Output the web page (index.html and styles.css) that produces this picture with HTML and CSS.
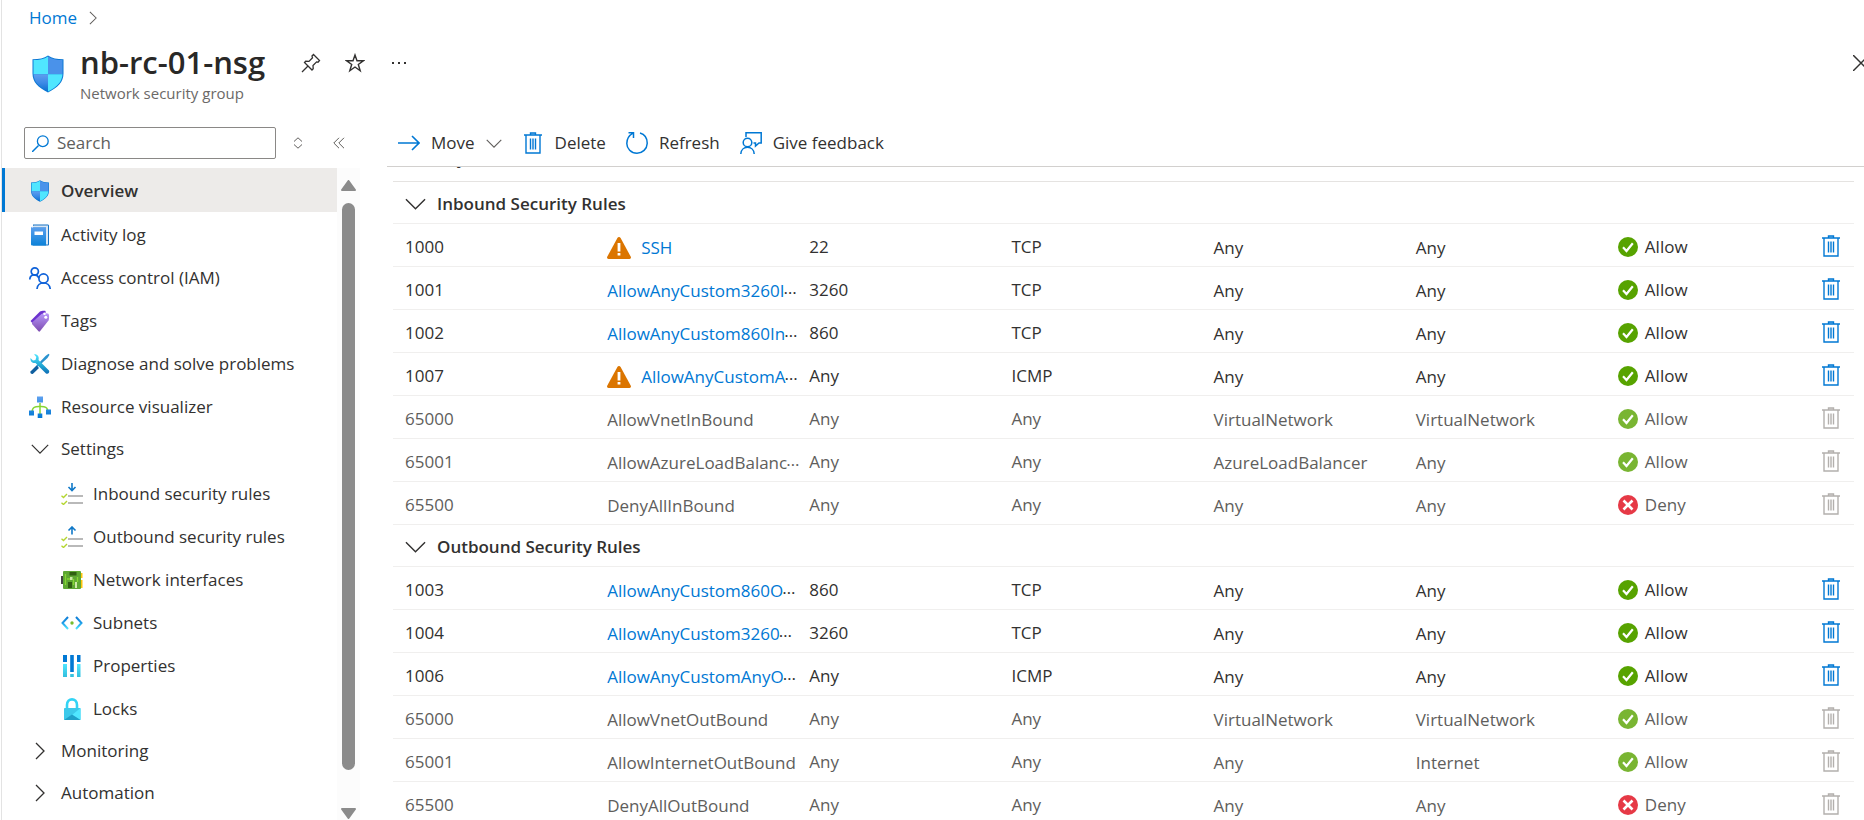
FILE: index.html
```html
<!DOCTYPE html>
<html lang="en">
<head>
    <meta charset="UTF-8">
    <meta name="viewport" content="width=device-width, initial-scale=1.0">
    <title>nb-rc-01-nsg</title>
    <link rel="stylesheet" href="styles.css">
</head>
<body>
    <!--shared icons-->
    <svg class="sprite" aria-hidden="true">
        <defs>
            <linearGradient id="g-dark" x1="0" y1="0" x2="0" y2="1"><stop offset="0" stop-color="#5e9ff0"/><stop offset=".5" stop-color="#3d8ae6"/><stop offset="1" stop-color="#0c70d0"/></linearGradient>
            <linearGradient id="g-book" x1="0" y1="0" x2="0" y2="1"><stop offset="0" stop-color="#5ea0ef"/><stop offset="1" stop-color="#0c82d8"/></linearGradient>
            <linearGradient id="g-tag" x1="0" y1="0" x2="0" y2="1"><stop offset="0" stop-color="#b796f9"/><stop offset="1" stop-color="#7d4cb0"/></linearGradient>
            <linearGradient id="g-tool" x1="0" y1="0" x2="0" y2="1"><stop offset="0" stop-color="#50e6ff"/><stop offset=".6" stop-color="#1fa5d2"/><stop offset="1" stop-color="#0f6db5"/></linearGradient>
            <linearGradient id="g-box" x1="0" y1="0" x2="0" y2="1"><stop offset="0" stop-color="#5ea0ef"/><stop offset="1" stop-color="#0078d4"/></linearGradient>
            <linearGradient id="g-angle" x1="0" y1="0" x2="0" y2="1"><stop offset="0" stop-color="#0f7cd6"/><stop offset=".5" stop-color="#1f9de8"/><stop offset="1" stop-color="#50e6ff"/></linearGradient>
            <linearGradient id="g-bar" x1="0" y1="0" x2="0" y2="1"><stop offset="0" stop-color="#50e6ff"/><stop offset="1" stop-color="#32bedd"/></linearGradient>
        </defs>
        <symbol id="shield" viewBox="0 0 32 38">
            <path d="M16 .5C12 3.300 7 4.200.5 4.200V18.500C.5 27 6 32.500 16 37.500 26 32.500 31.500 27 31.500 18.500V4.200C25 4.200 20 3.300 16 .5Z" fill="#0c78d4"/>
            <path d="M16 1.500C12 4.300 7.500 5 1.500 5.100V19.300H16Z" fill="#50e6ff"/>
            <path d="M16 1.500C20 4.300 24.500 5 30.500 5.100V19.300H16Z" fill="#4a92ea"/>
            <path d="M1.500 19.300C2 27 7 32 16 36.500V19.300Z" fill="url(#g-dark)"/>
            <path d="M30.500 19.300C30 27 25 32 16 36.500V19.300Z" fill="#50e6ff"/>
        </symbol>
        <symbol id="chev-down" viewBox="0 0 22 12"><path d="M1 1 11 11 21 1" fill="none" stroke="currentColor" stroke-width="1.500"/></symbol>
        <symbol id="chev-right" viewBox="0 0 10 18"><path d="M1 1 9 9 1 17" fill="none" stroke="currentColor" stroke-width="1.300"/></symbol>
        <symbol id="trash" viewBox="0 0 18 22">
            <path d="M6.500 3V1h5v2Z" fill="currentColor" fill-opacity=".25"/>
            <path d="M2 3.500V21H16V3.500M0 3H18M6.500 3V1h5v2M6.500 6.500v11M9 6.500v11M11.500 6.500v11" fill="none" stroke="currentColor" stroke-width="1.400"/>
        </symbol>
        <symbol id="ok" viewBox="0 0 20 20"><circle cx="10" cy="10" r="10" fill="currentColor"/><path d="M5 10.300 8.500 14 14.800 6.200" fill="none" stroke="#fff" stroke-width="2.200"/></symbol>
        <symbol id="no" viewBox="0 0 20 20"><circle cx="10" cy="10" r="10" fill="currentColor"/><path d="M5.500 5.500l9 9M14.500 5.500l-9 9" stroke="#fff" stroke-width="2.600"/></symbol>
        <symbol id="warn" viewBox="0 0 24 22">
            <path d="M12 0C12.800 0 13.200.4 13.600 1L23.800 19.800C24.300 21 23.700 22 22.500 22H1.500C.3 22-.3 21 .2 19.800L10.400 1C10.800.4 11.200 0 12 0Z" fill="#db7500"/>
            <path d="M10.600 6h2.800v8.500h-2.800ZM10.600 16h2.800v2.600h-2.800Z" fill="#fff"/>
        </symbol>
    </svg>

    <div class="page">
        <nav class="crumbs" aria-label="Breadcrumb">
            <a href="#">Home</a>
            <svg class="crumb-sep"><use href="#chev-right"/></svg>
        </nav>

        <header class="head">
            <svg class="head-icon"><use href="#shield"/></svg>
            <div class="head-text">
                <h1>nb-rc-01-nsg</h1>
                <p>Network security group</p>
            </div>
            <div class="head-actions">
                <button aria-label="Pin"><svg width="20" height="20" viewBox="0 0 20 20"><path d="M12.500 1.500 18.500 7.500 17 9.200 15.600 8.900 12 12.500 12.200 15.800 11 17 3.500 9.500 4.700 8.200 8 8.400 11.500 4.800 11 3ZM7 13 1 19" fill="none" stroke="currentColor" stroke-width="1.300"/></svg></button>
                <button aria-label="Favorite"><svg width="20" height="20" viewBox="0 0 20 20"><path d="M10 2 12 7.800H18.300L13.300 11.500 15.200 17.800 10 14 4.800 17.800 6.700 11.500 1.700 7.800H8Z" fill="none" stroke="currentColor" stroke-width="1.400"/></svg></button>
                <button aria-label="More"><svg width="20" height="20" viewBox="0 0 20 20"><path d="M3 9h2v2H3zM9 9h2v2H9zM15 9h2v2h-2z" fill="currentColor"/></svg></button>
            </div>
            <button class="close" aria-label="Close"><svg width="16" height="16" viewBox="0 0 16 16"><path d="M0 0 16 16M16 0 0 16" stroke="currentColor" stroke-width="1.500"/></svg></button>
        </header>

        <div class="content">
            <aside class="side">
                <div class="side-tools">
                    <label class="search">
                        <svg width="17" height="17" viewBox="0 0 17 17"><path d="M0 17 6.500 10.500" stroke="#0078d4" stroke-width="1.500"/><circle cx="10.800" cy="6.200" r="5.400" fill="none" stroke="#0078d4" stroke-width="1.300"/></svg>
                        <input type="text" placeholder="Search" aria-label="Search">
                    </label>
                    <button aria-label="Expand all"><svg width="10" height="12" viewBox="0 0 10 12"><path d="M1 4.500 5 .8 9 4.500M1 7.500 5 11.200 9 7.500" fill="none" stroke="currentColor"/></svg></button>
                    <button aria-label="Collapse menu"><svg width="12" height="12" viewBox="0 0 12 12"><path d="M6 .8.800 6 6 11.200M11 .8 5.800 6 11 11.200" fill="none" stroke="currentColor"/></svg></button>
                </div>
                <div class="side-scroll">
                    <nav class="menu">
                        <a class="item active" href="#"><svg class="icon"><use href="#shield"/></svg>Overview</a>
                        <a class="item" href="#"><svg class="icon" viewBox="0 0 22 22"><path d="M4 .5H18.500C19.500.5 20 1 20 2V20C20 21 19.500 21.500 18.500 21.500H4Z" fill="#1673c4"/><path d="M5 1.500H19V20.500H17V3.500H3.500C3.500 2.500 4 1.500 5 1.500Z" fill="#d9e7f5"/><path d="M2 2.500C2 3 2.500 3.500 3.500 3.500H17V21.500H3.500C2.500 21.500 2 21 2 20.500Z" fill="url(#g-book)"/><path d="M5.500 7.500h8.500v3.500H5.500z" fill="#fff"/></svg>Activity log</a>
                        <a class="item" href="#"><svg class="icon" viewBox="0 0 22 22"><g fill="none" stroke="#0f62d9" stroke-width="1.700"><circle cx="5.800" cy="4.500" r="3.600"/><circle cx="14.500" cy="11.500" r="4.600"/><path d="M.8 12.500C1 6.500 8.500 6.500 9.800 11M8 22C8.500 14 20.500 14 21.200 22"/></g></svg>Access control (IAM)</a>
                        <a class="item" href="#"><svg class="icon" viewBox="0 0 22 22"><path d="M1.500 11 11 1.500C12 .8 16 .5 16.500 1L17 6 6 16Z" fill="#6c32cf"/><path d="M3 12.500 12.500 4C13.500 3.300 18.500 3 19.500 4 20.500 5 20 9.500 19.500 10.500L11 21.300C10.500 21.800 10 21.800 9.500 21.300L3 14Z" fill="url(#g-tag)"/><circle cx="15.500" cy="3.800" r="1.300" fill="#fff"/><circle cx="16.800" cy="7.300" r="1.500" fill="#fff"/></svg>Tags</a>
                        <a class="item" href="#"><svg class="icon" viewBox="0 0 22 22"><path d="M19.500.8 20.500 1.800 18.500 5 8 14.500 6.800 13.200 16.500 3Z" fill="#2a93cf"/><path d="M7.500 12.500 10 15 4 20.800C2.500 21.500.8 20 1.500 18.500Z" fill="#0f5f9f"/><path d="M5 1.200C8.500.8 10.500 3.500 9.500 7L20 17.500C21 19.500 19 21.500 17 20.500L6.500 10C3.500 10.500 1 8.500 1.500 5L4 7.500 6.500 7 7.300 4Z" fill="url(#g-tool)"/></svg>Diagnose and solve problems</a>
                        <a class="item" href="#"><svg class="icon" viewBox="0 0 22 22"><path d="M11 7V18M3 17C3 10 7 10.500 11 10.500 15 10.500 19 10 19 17" fill="none" stroke="#86d633" stroke-width="1.500"/><path d="M8 .5h6v6H8zM0 14.500h5v5H0zM17 13.500h5v5h-5zM8.700 17.500h4.600v4.500H8.700z" fill="url(#g-box)"/></svg>Resource visualizer</a>
                        <button class="item group" aria-expanded="true"><span class="arrow"><svg class="arrow-down"><use href="#chev-down"/></svg></span>Settings</button>
                        <div class="sub">
                            <a class="item" href="#"><svg class="icon" viewBox="0 0 22 22"><path d="M11 0V7M7.500 4 11 7.500 14.500 4" fill="none" stroke="#0f78c8" stroke-width="1.600"/><path d="M7 13H22M7 20H22" stroke="#a3a3a3" stroke-width="1.500"/><path d="M.5 12.800 2.500 14.500 6 11M.5 19.800 2.500 21.500 6 18" fill="none" stroke="#b4d630" stroke-width="1.400"/></svg>Inbound security rules</a>
                            <a class="item" href="#"><svg class="icon" viewBox="0 0 22 22"><path d="M11 8.500V1M7.500 4.500 11 1 14.500 4.500" fill="none" stroke="#0f78c8" stroke-width="1.600"/><path d="M7 13H22M7 20H22" stroke="#a3a3a3" stroke-width="1.500"/><path d="M.5 12.800 2.500 14.500 6 11M.5 19.800 2.500 21.500 6 18" fill="none" stroke="#b4d630" stroke-width="1.400"/></svg>Outbound security rules</a>
                            <a class="item" href="#"><svg class="icon" viewBox="0 0 22 22"><path d="M0 7h2v8H0z" fill="#444"/><path d="M19 4h2.500v5H19zM19 11h2.500v8H19z" fill="#ffc40d"/><rect x="2" y="2" width="18" height="18" rx="1" fill="#5ea733"/><path d="M8.500 3h7v3.500h-7zM7 13h4v6H7z" fill="#2f5f12"/><path d="M4.500 5v11M6 10h4.500M16.500 8v5M12.500 10v6" stroke="#86d633" fill="none" stroke-width="1.300"/><path d="M9 8h2.500v3H9zM14 13h2v6h-2z" fill="#cdeaa8"/></svg>Network interfaces</a>
                            <a class="item" href="#"><svg class="icon" viewBox="0 0 22 22"><path d="M7 5 1.500 11 7 17M15 5 20.500 11 15 17" fill="none" stroke="url(#g-angle)" stroke-width="2"/><circle cx="11" cy="11" r="1.700" fill="#76bc2d"/></svg>Subnets</a>
                            <a class="item" href="#"><svg class="icon" viewBox="0 0 22 22"><path d="M2 0h4v7H2zM9.200 0h3.600v17H9.200zM16 0h3.500v7H16z" fill="#0078d4"/><path d="M2 9h4v13H2zM9.200 19h3.600v3H9.200zM16 9h3.500v13H16z" fill="url(#g-bar)"/></svg>Properties</a>
                            <a class="item" href="#"><svg class="icon" viewBox="0 0 22 22"><path d="M6 11V7C6 -.5 16 -.5 16 7V11" fill="none" stroke="#32d4f5" stroke-width="2.600"/><rect x="3" y="10" width="16.500" height="12" rx=".8" fill="#3cc9ea"/><path d="M19.500 10V22L11 17Z" fill="#50e6ff"/><path d="M3 22 11 16.500 19.500 22Z" fill="#1fa0c8"/></svg>Locks</a>
                        </div>
                        <button class="item group" aria-expanded="false"><span class="arrow"><svg class="arrow-right"><use href="#chev-right"/></svg></span>Monitoring</button>
                        <button class="item group" aria-expanded="false"><span class="arrow"><svg class="arrow-right"><use href="#chev-right"/></svg></span>Automation</button>
                    </nav>
                    <div class="scrollbar">
                        <svg width="15" height="11" viewBox="0 0 15 11"><path d="M7.500 1 14 10H1Z" fill="#8b8b8b" stroke="#8b8b8b" stroke-width="2" stroke-linejoin="round"/></svg>
                        <div class="thumb"></div>
                        <svg width="15" height="11" viewBox="0 0 15 11"><path d="M7.500 10 14 1H1Z" fill="#8b8b8b" stroke="#8b8b8b" stroke-width="2" stroke-linejoin="round"/></svg>
                    </div>
                </div>
            </aside>

            <main class="main">
                <div class="toolbar">
                    <button><svg width="22" height="16" viewBox="0 0 22 16"><path d="M0 8H21M14 1 21 8 14 15" fill="none" stroke="#0078d4" stroke-width="1.600"/></svg>Move<svg class="caret"><use href="#chev-down"/></svg></button>
                    <button><svg class="bin"><use href="#trash"/></svg>Delete</button>
                    <button><svg width="22" height="22" viewBox="0 0 22 22"><path d="M14 1C19 2.500 21.300 7 21.200 11.500 21 17 16.500 21.200 11 21.200 5 21.200.8 16.500.8 11.500.8 7 3 3.500 7 1.200M2.500 .8H7.500V6" fill="none" stroke="#0078d4" stroke-width="1.500"/></svg>Refresh</button>
                    <button><svg width="22" height="22" viewBox="0 0 22 22"><g fill="none" stroke="#0078d4" stroke-width="1.500"><path d="M6 5V.8H21.200V11H19L15.500 14V11H13.500"/><circle cx="7.500" cy="10.500" r="4.300"/><path d="M.8 22C1 13 14 13 14.200 22"/></g></svg>Give feedback</button>
                </div>
                <div class="rules-wrap">
                    <table class="rules">
                        <thead>
                            <tr><th>Priority</th><th aria-label="Name"></th><th aria-label="Port"></th><th aria-label="Protocol"></th><th aria-label="Source"></th><th aria-label="Destination"></th><th aria-label="Action"></th><th class="del"></th></tr>
                        </thead>
                        <tbody>
                            <tr class="section"><th colspan="8"><button aria-expanded="true"><svg class="section-arrow"><use href="#chev-down"/></svg>Inbound Security Rules</button></th></tr>
                            <tr>
                                <td>1000</td><td><div class="name"><svg class="warn"><use href="#warn"/></svg><a href="#">SSH</a></div></td><td>22</td><td>TCP</td><td>Any</td><td>Any</td>
                                <td><div class="act"><svg class="allow"><use href="#ok"/></svg>Allow</div></td><td class="del"><button aria-label="Delete rule"><svg class="bin"><use href="#trash"/></svg></button></td>
                            </tr>
                            <tr>
                                <td>1001</td><td><div class="name"><a href="#">AllowAnyCustom3260I</a><span class="dots">…</span></div></td><td>3260</td><td>TCP</td><td>Any</td><td>Any</td>
                                <td><div class="act"><svg class="allow"><use href="#ok"/></svg>Allow</div></td><td class="del"><button aria-label="Delete rule"><svg class="bin"><use href="#trash"/></svg></button></td>
                            </tr>
                            <tr>
                                <td>1002</td><td><div class="name"><a href="#">AllowAnyCustom860In</a><span class="dots">…</span></div></td><td>860</td><td>TCP</td><td>Any</td><td>Any</td>
                                <td><div class="act"><svg class="allow"><use href="#ok"/></svg>Allow</div></td><td class="del"><button aria-label="Delete rule"><svg class="bin"><use href="#trash"/></svg></button></td>
                            </tr>
                            <tr>
                                <td>1007</td><td><div class="name"><svg class="warn"><use href="#warn"/></svg><a href="#">AllowAnyCustomA</a><span class="dots">…</span></div></td><td>Any</td><td>ICMP</td><td>Any</td><td>Any</td>
                                <td><div class="act"><svg class="allow"><use href="#ok"/></svg>Allow</div></td><td class="del"><button aria-label="Delete rule"><svg class="bin"><use href="#trash"/></svg></button></td>
                            </tr>
                            <tr class="default">
                                <td>65000</td><td><div class="name">AllowVnetInBound</div></td><td>Any</td><td>Any</td><td>VirtualNetwork</td><td>VirtualNetwork</td>
                                <td><div class="act"><svg class="allow"><use href="#ok"/></svg>Allow</div></td><td class="del"><button aria-label="Delete rule" disabled><svg class="bin"><use href="#trash"/></svg></button></td>
                            </tr>
                            <tr class="default">
                                <td>65001</td><td><div class="name">AllowAzureLoadBalanc<span class="dots">…</span></div></td><td>Any</td><td>Any</td><td>AzureLoadBalancer</td><td>Any</td>
                                <td><div class="act"><svg class="allow"><use href="#ok"/></svg>Allow</div></td><td class="del"><button aria-label="Delete rule" disabled><svg class="bin"><use href="#trash"/></svg></button></td>
                            </tr>
                            <tr class="default">
                                <td>65500</td><td><div class="name">DenyAllInBound</div></td><td>Any</td><td>Any</td><td>Any</td><td>Any</td>
                                <td><div class="act"><svg class="deny"><use href="#no"/></svg>Deny</div></td><td class="del"><button aria-label="Delete rule" disabled><svg class="bin"><use href="#trash"/></svg></button></td>
                            </tr>
                        </tbody>
                        <tbody>
                            <tr class="section"><th colspan="8"><button aria-expanded="true"><svg class="section-arrow"><use href="#chev-down"/></svg>Outbound Security Rules</button></th></tr>
                            <tr>
                                <td>1003</td><td><div class="name"><a href="#">AllowAnyCustom860O</a><span class="dots">…</span></div></td><td>860</td><td>TCP</td><td>Any</td><td>Any</td>
                                <td><div class="act"><svg class="allow"><use href="#ok"/></svg>Allow</div></td><td class="del"><button aria-label="Delete rule"><svg class="bin"><use href="#trash"/></svg></button></td>
                            </tr>
                            <tr>
                                <td>1004</td><td><div class="name"><a href="#">AllowAnyCustom3260</a><span class="dots">…</span></div></td><td>3260</td><td>TCP</td><td>Any</td><td>Any</td>
                                <td><div class="act"><svg class="allow"><use href="#ok"/></svg>Allow</div></td><td class="del"><button aria-label="Delete rule"><svg class="bin"><use href="#trash"/></svg></button></td>
                            </tr>
                            <tr>
                                <td>1006</td><td><div class="name"><a href="#">AllowAnyCustomAnyO</a><span class="dots">…</span></div></td><td>Any</td><td>ICMP</td><td>Any</td><td>Any</td>
                                <td><div class="act"><svg class="allow"><use href="#ok"/></svg>Allow</div></td><td class="del"><button aria-label="Delete rule"><svg class="bin"><use href="#trash"/></svg></button></td>
                            </tr>
                            <tr class="default">
                                <td>65000</td><td><div class="name">AllowVnetOutBound</div></td><td>Any</td><td>Any</td><td>VirtualNetwork</td><td>VirtualNetwork</td>
                                <td><div class="act"><svg class="allow"><use href="#ok"/></svg>Allow</div></td><td class="del"><button aria-label="Delete rule" disabled><svg class="bin"><use href="#trash"/></svg></button></td>
                            </tr>
                            <tr class="default">
                                <td>65001</td><td><div class="name">AllowInternetOutBound</div></td><td>Any</td><td>Any</td><td>Any</td><td>Internet</td>
                                <td><div class="act"><svg class="allow"><use href="#ok"/></svg>Allow</div></td><td class="del"><button aria-label="Delete rule" disabled><svg class="bin"><use href="#trash"/></svg></button></td>
                            </tr>
                            <tr class="default">
                                <td>65500</td><td><div class="name">DenyAllOutBound</div></td><td>Any</td><td>Any</td><td>Any</td><td>Any</td>
                                <td><div class="act"><svg class="deny"><use href="#no"/></svg>Deny</div></td><td class="del"><button aria-label="Delete rule" disabled><svg class="bin"><use href="#trash"/></svg></button></td>
                            </tr>
                        </tbody>
                    </table>
                </div>
            </main>
        </div>
    </div>
</body>
</html>
```

FILE: styles.css
```css
*{
    padding: 0;
    margin: 0;
    box-sizing: border-box;
}
body{
    background-color: #fff;
    color: #323130;
    font-family: 'Segoe UI', 'Open Sans', 'Noto Sans', sans-serif;
    font-size: 17px;
    line-height: 24px;
}
a{
    color: #0078d4;
    text-decoration: none;
}
button{
    border: 0;
    background: none;
    color: inherit;
    font: inherit;
    cursor: pointer;
}
svg{
    display: block;
    flex-shrink: 0;
}
.sprite{
    position: absolute;
    width: 0;
    height: 0;
}
.page{
    display: flex;
    flex-direction: column;
    height: 100vh;
    margin-left: 1px;
    border-left: 1px solid #e3e3e3;
    overflow: hidden;
}

/* breadcrumb and title */
.crumbs{
    display: flex;
    align-items: center;
    gap: 12px;
    padding: 6px 27px 0;
}
.crumb-sep{
    width: 8px;
    height: 14px;
    color: #605e5c;
}
.head{
    display: flex;
    align-items: flex-start;
    padding: 12px 0 16px 30px;
}
.head-icon{
    width: 32px;
    height: 38px;
    margin-top: 13px;
}
.head-text{
    margin-left: 16px;
}
.head-text h1{
    font-size: 31px;
    font-weight: 600;
    line-height: 40px;
    color: #292827;
}
.head-text p{
    font-size: 15px;
    line-height: 22px;
    color: #6b6967;
}
.head-actions{
    display: flex;
    gap: 24px;
    margin: 11px 0 0 36px;
}
.close{
    margin: 13px -5px 0 auto;
}

.content{
    display: flex;
    flex: 1;
    min-height: 0;
}

/* left menu */
.side{
    display: flex;
    flex-direction: column;
    width: 358px;
    flex-shrink: 0;
    padding-top: 7px;
}
.side-tools{
    display: flex;
    align-items: center;
    padding-left: 22px;
    color: #605e5c;
}
.search{
    display: flex;
    align-items: center;
    gap: 8px;
    width: 252px;
    height: 32px;
    padding-left: 7px;
    border: 1px solid #8a8886;
    border-radius: 2px;
}
.search input{
    flex: 1;
    min-width: 0;
    border: 0;
    outline: 0;
    font: inherit;
}
.search input::placeholder{
    color: #605e5c;
}
.side-tools button{
    margin-left: 17px;
}
.side-tools button + button{
    margin-left: 30px;
}
.side-scroll{
    display: flex;
    flex: 1;
    min-height: 0;
    margin-top: 9px;
}
.menu{
    flex: 1;
    overflow: hidden;
}
.item{
    display: flex;
    align-items: center;
    gap: 10px;
    width: 100%;
    height: 43px;
    padding-left: 27px;
    color: #323130;
}
.item.active{
    height: 44px;
    margin-bottom: 1px;
    padding-top: 2px;
    padding-left: 24px;
    border-left: 3px solid #0078d4;
    background-color: #edebe9;
    font-weight: 600;
}
.item.group{
    height: 42px;
}
.icon{
    width: 22px;
    height: 22px;
}
.arrow{
    display: flex;
    justify-content: center;
    width: 22px;
}
.arrow-down{
    width: 18px;
    height: 10px;
}
.arrow-right{
    width: 10px;
    height: 18px;
}
.sub{
    padding-top: 2px;
}
.sub .item{
    padding-left: 59px;
}
.scrollbar{
    display: flex;
    flex-direction: column;
    align-items: center;
    gap: 12px;
    width: 23px;
    padding: 12px 0 1px;
    background-color: #fcfcfc;
}
.thumb{
    flex: 1;
    width: 13px;
    margin-bottom: 26px;
    border-radius: 7px;
    background-color: #8b8b8b;
}

/* commands */
.main{
    display: flex;
    flex-direction: column;
    flex: 1;
    min-width: 0;
    margin-left: 27px;
}
.toolbar{
    display: flex;
    align-items: center;
    gap: 20px;
    height: 47px;
    padding-left: 11px;
    border-bottom: 1px solid #d2d0ce;
}
.toolbar button{
    display: flex;
    align-items: center;
    gap: 11px;
}
.caret{
    width: 16px;
    height: 9px;
    color: #605e5c;
}
.bin{
    width: 18px;
    height: 22px;
    color: #0078d4;
}
.toolbar .bin{
    margin: 0 2px;
}

/* rules list, scrolled just past its header row */
.rules-wrap{
    flex: 1;
    min-height: 0;
    padding: 0 10px 0 6px;
    overflow: hidden;
}
.rules{
    width: 100%;
    margin-top: -29px;
    border-collapse: separate;
    border-spacing: 0;
    table-layout: fixed;
}
.rules th,
.rules td{
    height: 43px;
    padding: 3px 0 0 12px;
    border-bottom: 1px solid #f0efee;
    text-align: left;
    white-space: nowrap;
}
.rules td:nth-child(2),
.rules td:nth-child(5),
.rules td:nth-child(6){
    padding-top: 6px;
}
.rules th{
    font-weight: 600;
}
.rules thead th{
    height: 44px;
    padding: 0 0 4px 12px;
    border-color: #e5e3e1;
}
.rules .section th{
    height: 42px;
    padding-top: 2px;
}
.section button{
    display: flex;
    align-items: center;
    gap: 11px;
}
.section-arrow{
    width: 21px;
    height: 12px;
}
.rules .del{
    width: 46px;
    padding: 2px 0 0;
}
.del button{
    display: block;
    margin: 0 auto;
}
.name,
.act{
    display: flex;
    align-items: center;
}
.dots{
    margin-left: -1px;
    padding-bottom: 6px;
}
.warn{
    width: 24px;
    height: 22px;
    margin-right: 10px;
}
.act{
    gap: 7px;
}
.act svg{
    width: 20px;
    height: 20px;
}
.allow{
    color: #57a300;
}
.deny{
    color: #e63946;
}
.default td{
    color: #605e5c;
}
.default .allow{
    color: #79b532;
}
.default .bin{
    color: #b3b0ad;
}
```
